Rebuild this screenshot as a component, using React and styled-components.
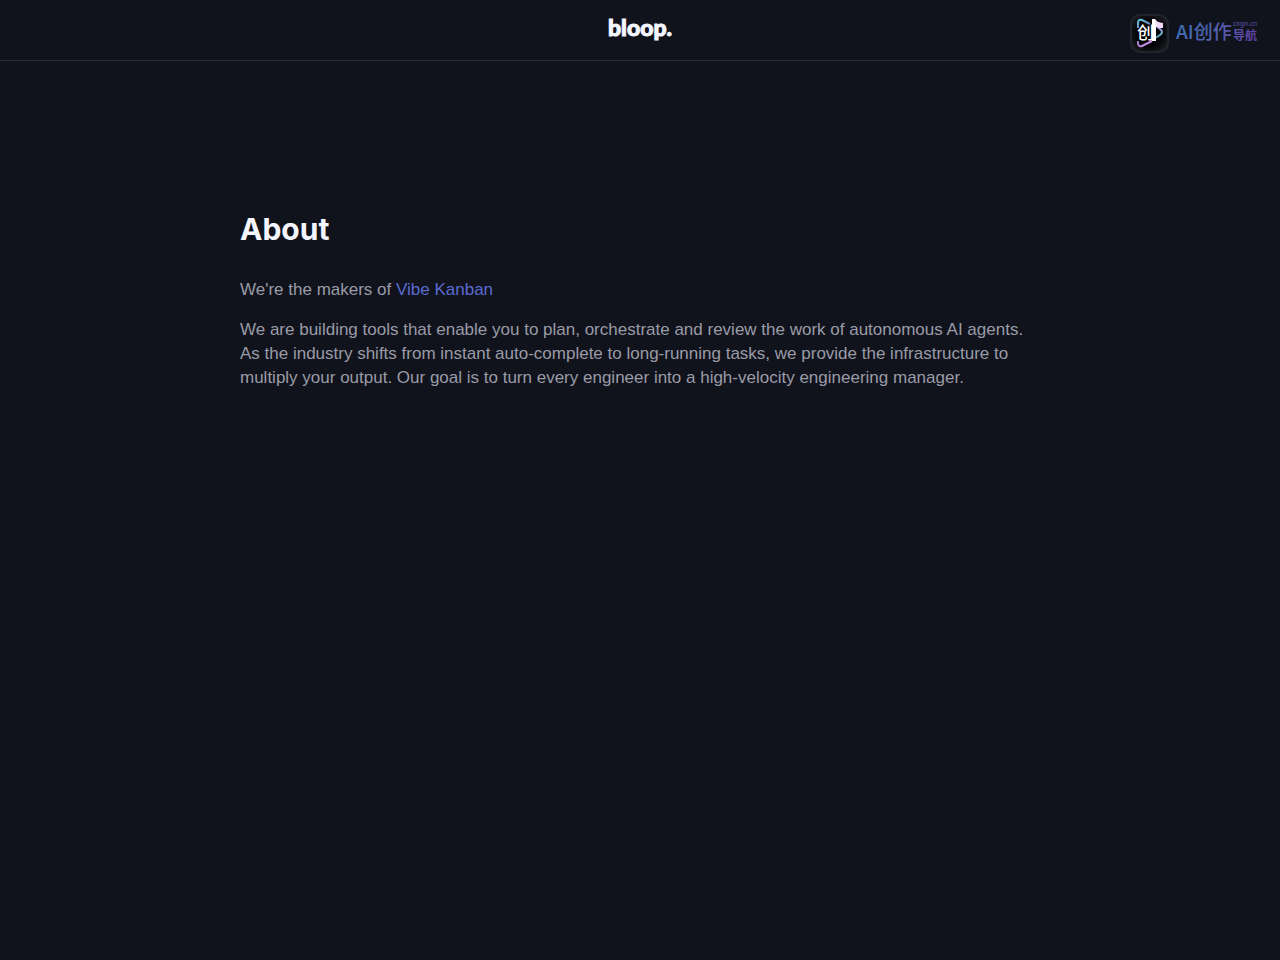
import React from "react"
import styled, { createGlobalStyle } from 'styled-components';

const GlobalStyle = createGlobalStyle`
    * {
        box-sizing: border-box;
    }

    body {
        margin: 0;
        background-color: #10131c;
        color: #9a9ba7;
        font-family: "Liberation Sans", Arial, "Noto Sans CJK SC", sans-serif;
    }
`

const Header = styled.header`
    display: grid;
    grid-template-columns: 1fr auto 1fr;
    align-items: center;
    height: 61px;
    padding: 0 20px;
    border-bottom: 1px solid #282b3b;
`

const Logo = styled.a`
    grid-column: 2;
    padding-bottom: 6px;
    color: #f4f6ff;
    font-family: Lato, sans-serif;
    font-size: 23px;
    font-weight: 900;
    line-height: 32px;
    text-decoration: none;
    -webkit-text-stroke: 1px #f4f6ff;
`

const Partner = styled.a`
    display: flex;
    justify-self: end;
    align-items: center;
    gap: 7px;
    padding-top: 8px;
    text-decoration: none;
`

const PartnerIcon = styled.svg`
    width: 40px;
    height: 40px;
`

const PartnerName = styled.svg`
    width: 84px;
    height: 40px;
    font-family: "Noto Sans CJK SC", sans-serif;
`

const Main = styled.main`
    max-width: 840px;
    margin: 0 auto;
    padding: 148px 20px 80px;
`

const Title = styled.h1`
    margin: 0 0 28px;
    color: #f4f6ff;
    font-family: Inter, sans-serif;
    font-size: 30px;
    font-weight: 700;
    line-height: 41px;
`

const Paragraph = styled.p`
    margin: 0 0 16px;
    font-size: 17px;
    line-height: 24px;
`

const TextLink = styled.a`
    color: #5b6ad0;
    text-decoration: none;
`

function PartnerBadge() {
  return (
    <Partner href="#partner" aria-label="AI创作导航">
        <PartnerIcon viewBox="0 0 40 40" aria-hidden="true">
            <defs>
                <linearGradient id="play" x1="0" y1="0" x2="0.3" y2="1">
                    <stop offset="0" stopColor="#63c9e4" />
                    <stop offset="0.5" stopColor="#6a68a4" />
                    <stop offset="1" stopColor="#c58ae8" />
                </linearGradient>
                <linearGradient id="tip" x1="0" y1="0" x2="0" y2="1">
                    <stop offset="0" stopColor="#c58ae8" />
                    <stop offset="0.6" stopColor="#5fb8c8" />
                    <stop offset="1" stopColor="#5a80c0" />
                </linearGradient>
                <radialGradient id="tile" r="0.65">
                    <stop offset="0.5" stopColor="#030305" />
                    <stop offset="1" stopColor="#202229" />
                </radialGradient>
            </defs>
            <rect x="2" y="1" width="37" height="37" rx="9" fill="url(#tile)" stroke="#22242b" strokeWidth="2" />
            <path d="M9 14v-5q0-4 4-3l8 4M9 27v2q0 4 4 3l10-5" fill="none" stroke="url(#play)" strokeWidth="2" />
            <path d="M27 12l4 3q4 3 0 6l-8 5" fill="none" stroke="url(#tip)" strokeWidth="2" />
            <path d="M23 5h3q2 4 8 4v5q-5 0-7-2v15h-4z" fill="#fff" />
            <path d="M26 5q2 4 8 4v5q-5 0-7-2z" fill="#f3d9fa" />
            <text x="8" y="25" fill="#fff" fontFamily="Noto Sans CJK SC" fontSize="17" fontWeight="500">创</text>
        </PartnerIcon>
        <PartnerName viewBox="0 0 84 40" aria-hidden="true">
            <defs>
                <linearGradient id="name" gradientUnits="userSpaceOnUse" x1="0" y1="0" x2="84" y2="16">
                    <stop offset="0" stopColor="#3b6fb2" />
                    <stop offset="0.5" stopColor="#5460ad" />
                    <stop offset="1" stopColor="#6040a0" />
                </linearGradient>
            </defs>
            <g fill="url(#name)">
                <text x="0" y="25" fontSize="19" fontWeight="500">AI创作</text>
                <text x="57" y="12" fontSize="7" fontFamily="Liberation Sans">cxgn.cn</text>
                <text x="57" y="26" fontSize="12" fontWeight="700">导航</text>
            </g>
        </PartnerName>
    </Partner>
  );
}

function App() {
  return (
    <>
        <GlobalStyle />
        <Header>
            <Logo href="#home">bloop.</Logo>
            <PartnerBadge />
        </Header>
        <Main>
            <Title>About</Title>
            <Paragraph>
                We're the makers of <TextLink href="#vibe-kanban">Vibe Kanban</TextLink>
            </Paragraph>
            <Paragraph>
                We are building tools that enable you to plan, orchestrate and review the work of autonomous AI agents.
                As the industry shifts from instant auto-complete to long-running tasks, we provide the infrastructure
                to multiply your output. Our goal is to turn every engineer into a high-velocity engineering manager.
            </Paragraph>
        </Main>
    </>
  );
}

export default App;
